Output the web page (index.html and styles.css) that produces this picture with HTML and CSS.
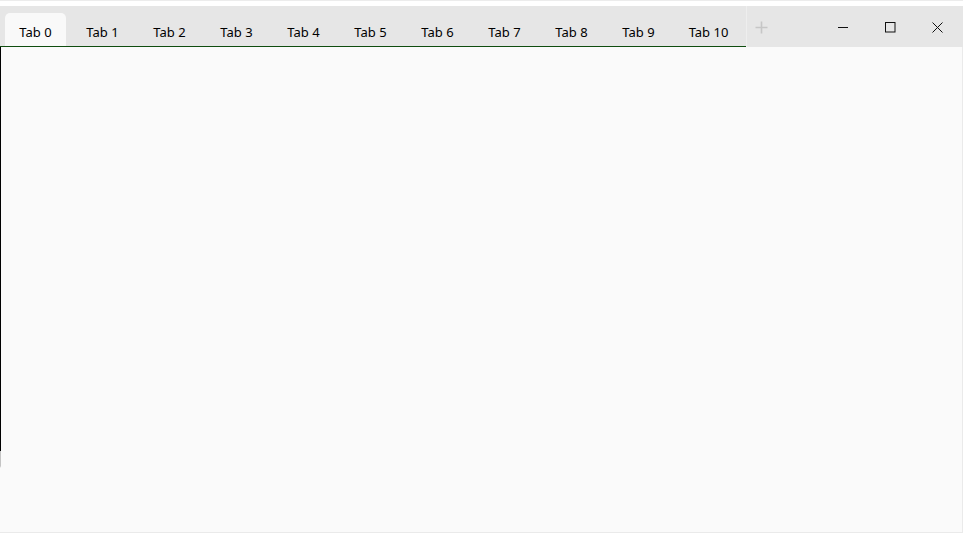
FILE: index.html
```html
<!DOCTYPE html>
<html>
<head>
<meta charset="utf-8">
<link rel="stylesheet" href="styles.css">
</head>
<body>
<div class="topgap"></div>
<div class="window">
  <div class="titlebar">
    <div class="tabstrip">
      <div class="tab selected">Tab 0</div>
      <div class="tab">Tab 1</div>
      <div class="tab">Tab 2</div>
      <div class="tab">Tab 3</div>
      <div class="tab">Tab 4</div>
      <div class="tab">Tab 5</div>
      <div class="tab">Tab 6</div>
      <div class="tab">Tab 7</div>
      <div class="tab">Tab 8</div>
      <div class="tab">Tab 9</div>
      <div class="tab wide">Tab 10</div>
    </div>
    <div class="addtab">
      <svg width="13" height="13" viewBox="0 0 13 13"><path d="M6.5 0.5V12.5M0.5 6.5H12.5" stroke="#c6c6c6" stroke-width="1.6" fill="none"/></svg>
    </div>
    <div class="controls">
      <div class="ctl">
        <svg width="11" height="11" viewBox="0 0 11 11"><path d="M0 5.5H10" stroke="#111" stroke-width="1" fill="none"/></svg>
      </div>
      <div class="ctl">
        <svg width="11" height="11" viewBox="0 0 11 11"><rect x="0.5" y="0.5" width="9.5" height="9.5" stroke="#111" stroke-width="1" fill="none"/></svg>
      </div>
      <div class="ctl">
        <svg width="11" height="11" viewBox="0 0 11 11"><path d="M0.5 0.5L10.5 10.5M10.5 0.5L0.5 10.5" stroke="#111" stroke-width="1" fill="none"/></svg>
      </div>
    </div>
  </div>
  <div class="content">
    <div class="leftedge"></div>
  </div>
</div>
</body>
</html>
```
FILE: styles.css
```css
html, body {
  margin: 0;
  padding: 0;
  background: #ffffff;
}
body {
  width: 963px;
  height: 533px;
  overflow: hidden;
  font-family: "Noto Sans", "Open Sans", "DejaVu Sans", sans-serif;
}
.topgap {
  height: 6px;
  border-top: 1px solid #ececec;
  box-sizing: border-box;
  background: #ffffff;
}
.window {
  width: 963px;
  height: 527px;
  display: flex;
  flex-direction: column;
}
.titlebar {
  height: 41px;
  display: flex;
  background: #e6e6e6;
  flex: none;
}
.tabstrip {
  width: 746px;
  box-sizing: border-box;
  display: flex;
  align-items: flex-end;
  gap: 6px;
  padding-left: 5px;
  border-bottom: 1px solid #0f4d0f;
}
.tab {
  width: 61px;
  height: 33px;
  box-sizing: border-box;
  display: flex;
  align-items: center;
  justify-content: center;
  padding-top: 4px;
  font-size: 13px;
  color: #000;
  border-radius: 5px 5px 0 0;
  white-space: nowrap;
}
.tab.wide {
  width: 71px;
  padding-right: 4px;
}
.tab.selected {
  background: #f9f9f9;
}
.addtab {
  width: 30px;
  display: flex;
  align-items: center;
  justify-content: center;
  padding-top: 1px;
  padding-right: 1px;
  border-left: 1px solid #eeeeee;
  box-sizing: border-box;
}
.controls {
  margin-left: auto;
  display: flex;
  margin-right: 2px;
}
.ctl {
  width: 47px;
  display: flex;
  align-items: center;
  justify-content: center;
  padding-top: 1px;
}
.content {
  flex: 1;
  background: #fafafa;
  border-right: 1px solid #eaeaea;
  border-bottom: 1px solid #eaeaea;
  display: flex;
}
.leftedge {
  width: 1px;
  height: 421px;
  background: linear-gradient(to bottom, #000 0, #000 404px, #c4c4c4 404px, #c4c4c4 419px, #fafafa 421px);
}
```
